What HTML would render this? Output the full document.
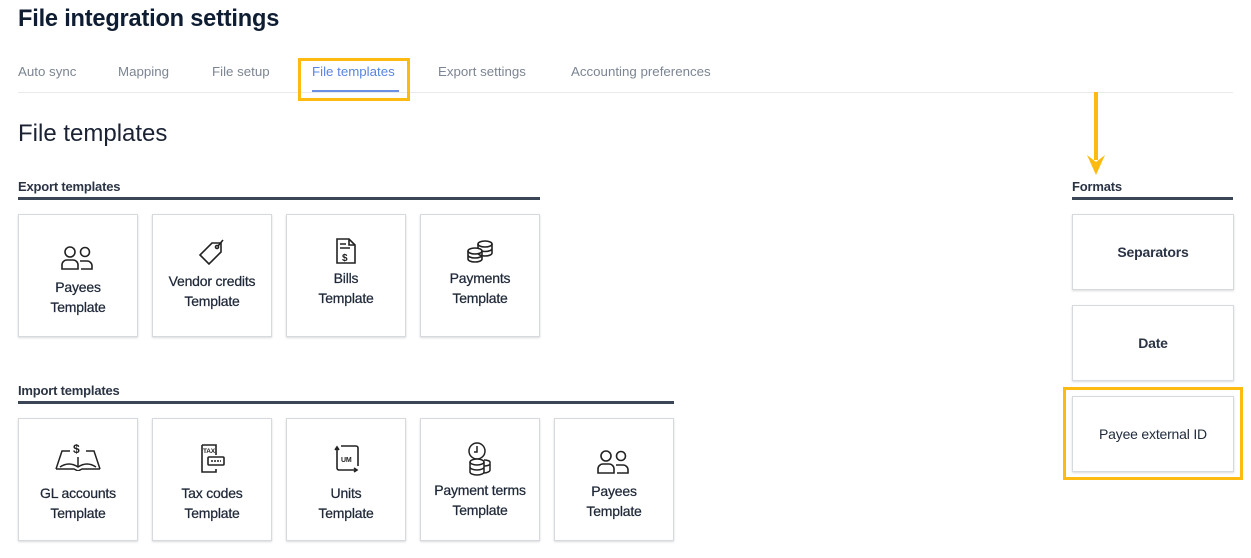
<!DOCTYPE html>
<html><head><meta charset="utf-8"><style>
*{margin:0;padding:0;box-sizing:border-box}
body{width:1251px;height:558px;background:#fff;font-family:"Liberation Sans",sans-serif;color:#2b3445;position:relative;overflow:hidden}
.a{position:absolute}
h1{position:absolute;left:18px;top:6px;font-size:23.6px;font-weight:bold;color:#0f1d33;letter-spacing:-0.2px}
.tab{position:absolute;top:64px;font-size:13.3px;color:#7c8593}
.sec{position:absolute;font-size:13px;font-weight:bold;color:#2b3445;letter-spacing:-0.2px}
.line{position:absolute;height:3px;background:#3a4556}
.card{position:absolute;width:120px;height:123px;border:1px solid #d6d9dd;box-shadow:0 1px 2px rgba(0,0,0,.15);background:#fff;text-align:center;font-size:14px;color:#1f2838;line-height:20px;letter-spacing:-0.2px;-webkit-text-stroke:0.25px #1f2838}
.card svg{display:block;margin:0 auto}
.fc{position:absolute;left:1072px;width:162px;height:76px;border:1px solid #d6d9dd;box-shadow:0 1px 2px rgba(0,0,0,.15);text-align:center;line-height:74px;font-size:14px;font-weight:bold;color:#2b3445;letter-spacing:-0.2px}
.hl{position:absolute;border:3px solid #fdbb12}
</style></head><body>
<h1>File integration settings</h1>
<div class="tab" style="left:18px">Auto sync</div>
<div class="tab" style="left:118px">Mapping</div>
<div class="tab" style="left:212px">File setup</div>
<div class="tab" style="left:312px;color:#5b84e3">File templates</div>
<div class="tab" style="left:438px">Export settings</div>
<div class="tab" style="left:571px">Accounting preferences</div>
<div class="a" style="left:18px;top:92px;width:1215px;height:1px;background:#e8eaed"></div>
<div class="a" style="left:312px;top:90px;width:87px;height:2px;background:#6b8fe3"></div>
<div class="hl" style="left:298px;top:58px;width:112px;height:43px"></div>

<div class="a" style="left:18px;top:120px;font-size:24px;color:#1a2233">File templates</div>

<div class="sec" style="left:18px;top:179px">Export templates</div>
<div class="line" style="left:18px;top:197px;width:522px"></div>

<div class="card" style="left:18px;top:214px;padding-top:30px">
<svg width="36" height="26" viewBox="0 0 36 26" fill="none" stroke="#222" stroke-width="1.6"><circle cx="10" cy="7" r="5"/><circle cx="25" cy="7" r="4.5"/><path d="M2 24v-4a5 5 0 0 1 5-5h6a5 5 0 0 1 5 5v4z"/><path d="M20 16h7a5 5 0 0 1 5 5v3h-11"/></svg>
<div style="margin-top:6px">Payees<br>Template</div></div>
<div class="card" style="left:152px;top:214px;padding-top:22px">
<svg width="30" height="30" viewBox="0 0 30 30" fill="none" stroke="#222" stroke-width="1.6"><path d="M15 6h9v9L12 27 3 18z"/><circle cx="20" cy="10" r="1.5"/><path d="M21 9l5-6"/></svg>
<div style="margin-top:4px">Vendor credits<br>Template</div></div>
<div class="card" style="left:286px;top:214px;padding-top:22px">
<svg width="22" height="28" viewBox="0 0 22 28" fill="none" stroke="#222" stroke-width="1.6"><path d="M2 2h12l6 6v18H2z M14 2v6h6"/><path d="M5 7h6M5 11h10"/><text x="7" y="24" font-size="10" font-family="Liberation Sans" fill="#222" stroke="none" font-weight="bold">$</text></svg>
<div style="margin-top:3px">Bills<br>Template</div></div>
<div class="card" style="left:420px;top:214px;padding-top:24px">
<svg width="28" height="24" viewBox="0 0 28 24" fill="none" stroke="#222" stroke-width="1.6"><ellipse cx="19" cy="5" rx="7" ry="3"/><path d="M12 5v9c0 1.6 3 3 7 3s7-1.4 7-3V5M12 9.5c0 1.6 3 3 7 3s7-1.4 7-3"/><ellipse cx="9" cy="12" rx="7" ry="3" fill="#fff"/><path d="M2 12v8c0 1.6 3 3 7 3s7-1.4 7-3v-8M2 16c0 1.6 3 3 7 3s7-1.4 7-3"/></svg>
<div style="margin-top:5px">Payments<br>Template</div></div>

<div class="sec" style="left:18px;top:383px">Import templates</div>
<div class="line" style="left:18px;top:401px;width:656px"></div>

<div class="card" style="left:18px;top:418px;padding-top:22px">
<svg width="50" height="30" viewBox="0 0 50 30" fill="none" stroke="#222" stroke-width="1.5"><path d="M3 28l6-18h8M47 28l-6-18h-8M3 28h18l4 2 4-2h18M7 26c6-4 12-4 18 0 6-4 12-4 18 0"/><path d="M25 26V16"/><text x="20" y="12" font-size="12" font-weight="bold" font-family="Liberation Sans" fill="#222" stroke="none">$</text></svg>
<div style="margin-top:12px">GL accounts<br>Template</div></div>
<div class="card" style="left:152px;top:418px;padding-top:24px">
<svg width="28" height="30" viewBox="0 0 28 30" fill="none" stroke="#222" stroke-width="1.6"><path d="M4 2h14v10M18 26v3H4V2"/><rect x="10" y="14" width="16" height="8" rx="1"/><path d="M13 18h10" stroke-dasharray="2 1"/><text x="5" y="10" font-size="6.5" font-weight="bold" font-family="Liberation Sans" fill="#222" stroke="none">TAX</text></svg>
<div style="margin-top:10px">Tax codes<br>Template</div></div>
<div class="card" style="left:286px;top:418px;padding-top:24px">
<svg width="30" height="30" viewBox="0 0 30 30" fill="none" stroke="#222" stroke-width="1.6"><path d="M6 5v20a2 2 0 0 0 2 2h17M4 7l2-3 2 3M10 3h15a2 2 0 0 1 2 2v18M23 25l3 2-3 2"/><text x="10" y="19" font-size="7" font-weight="bold" font-family="Liberation Sans" fill="#222" stroke="none">UM</text></svg>
<div style="margin-top:10px">Units<br>Template</div></div>
<div class="card" style="left:420px;top:418px;padding-top:22px">
<svg width="26" height="36" viewBox="0 0 26 36" fill="none" stroke="#222" stroke-width="1.5"><circle cx="10" cy="10" r="8"/><path d="M10 5v6h-3"/><ellipse cx="10" cy="21" rx="7" ry="3" fill="#fff"/><path d="M3 21v10c0 1.6 3 3 7 3s7-1.4 7-3V21M3 26c0 1.6 3 3 7 3s7-1.4 7-3"/><path d="M17 19c3 0 6 1 6 2v8c0 1.6-3 3-6 3M17 25c3 0 6-1 6-2"/></svg>
<div style="margin-top:3px">Payment terms<br>Template</div></div>
<div class="card" style="left:554px;top:418px;padding-top:30px">
<svg width="36" height="26" viewBox="0 0 36 26" fill="none" stroke="#222" stroke-width="1.6"><circle cx="10" cy="7" r="5"/><circle cx="25" cy="7" r="4.5"/><path d="M2 24v-4a5 5 0 0 1 5-5h6a5 5 0 0 1 5 5v4z"/><path d="M20 16h7a5 5 0 0 1 5 5v3h-11"/></svg>
<div style="margin-top:6px">Payees<br>Template</div></div>

<div class="sec" style="left:1072px;top:179px">Formats</div>
<div class="line" style="left:1072px;top:197px;width:161px"></div>
<div class="fc" style="top:214px">Separators</div>
<div class="fc" style="top:305px">Date</div>
<div class="fc" style="top:396px;font-weight:normal;color:#1f2a3c">Payee external ID</div>
<div class="hl" style="left:1063px;top:387px;width:180px;height:93px"></div>

<div class="a" style="left:1094px;top:92px;width:4px;height:68px;background:#fdbb12"></div>
<svg class="a" style="left:1087px;top:155px" width="18" height="22"><path d="M0 0L9 20L18 0L9 7z" fill="#fdbb12"/></svg>
</body></html>
